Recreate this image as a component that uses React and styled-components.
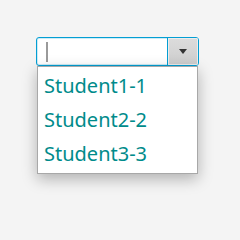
import React from "react";
import styled, { createGlobalStyle } from "styled-components";

const GlobalStyle = createGlobalStyle`
  html, body {
    margin: 0;
    padding: 0;
    background: #f4f4f4;
    font-family: "Segoe UI", "Noto Sans", "Liberation Sans", sans-serif;
  }
`;

const Page = styled.div`
  width: 240px;
  height: 240px;
  padding: 37px 0 0 36px;
  box-sizing: border-box;
`;

const Combo = styled.div`
  position: relative;
  width: 163px;
`;

const Field = styled.div`
  display: flex;
  height: 29px;
  box-sizing: border-box;
  border: 1px solid #039ed3;
  border-radius: 3px;
  box-shadow: inset 0 0 0 1px #ccebf6;
  background: #fff;
  overflow: hidden;
`;

const Editor = styled.div`
  flex: 1;
  display: flex;
  align-items: center;
  padding-left: 9px;
  border-right: 1px solid #039ed3;
`;

const Caret = styled.span`
  width: 2px;
  height: 20px;
  background: #9a9a9a;
`;

const ArrowButton = styled.div`
  width: 30px;
  display: flex;
  align-items: center;
  justify-content: center;
  background: linear-gradient(#dcdcdc, #cdcdcd);
  box-shadow: inset 0 0 0 1px #ececec;
`;

const Popup = styled.ul`
  position: absolute;
  top: 29px;
  left: 1px;
  width: 161px;
  margin: 0;
  padding: 2px 0;
  list-style: none;
  background: #fff;
  border: 1px solid #a8a8a8;
  box-sizing: border-box;
  box-shadow: 0 5px 14px rgba(0, 0, 0, 0.28);
`;

const Item = styled.li`
  height: 34px;
  line-height: 34px;
  padding-left: 6px;
  font-size: 20px;
  color: #008b8b;
  white-space: nowrap;
`;

const students = ["Student1-1", "Student2-2", "Student3-3"];

export default function App() {
  return (
    <Page>
      <GlobalStyle />
      <Combo>
        <Field>
          <Editor>
            <Caret />
          </Editor>
          <ArrowButton>
            <svg width="8" height="5" viewBox="0 0 8 5">
              <path d="M0 0 L8 0 L4 5 Z" fill="#333" />
            </svg>
          </ArrowButton>
        </Field>
        <Popup>
          {students.map((s) => (
            <Item key={s}>{s}</Item>
          ))}
        </Popup>
      </Combo>
    </Page>
  );
}
